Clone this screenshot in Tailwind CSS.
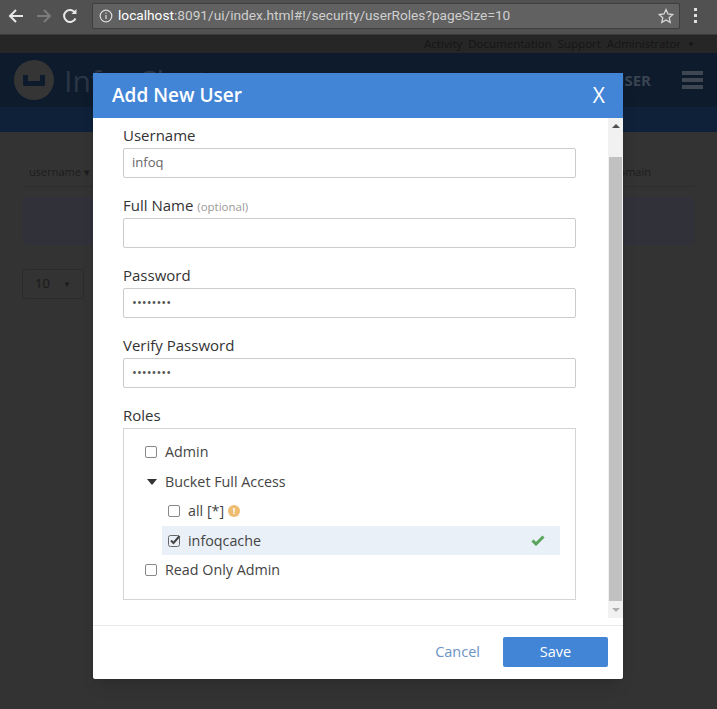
<!DOCTYPE html>
<html lang="en">
<head>
    <title>Add New User</title>
    <meta charset="utf-8">
    <script src="https://cdn.jsdelivr.net/npm/@tailwindcss/browser@4"></script>
</head>
<body class="bg-[#333333] font-['Open_Sans',sans-serif]">
    <div class="relative h-[709px] w-[717px] overflow-hidden">
        <!-- Browser toolbar -->
        <div class="flex h-[35px] items-center bg-[#515151] border-b border-[#3a3a3a] pb-[3px]">
            <div class="flex w-[92px] items-center">
                <svg class="ml-[8px] text-[#e8e8e8]" width="16" height="16" viewBox="0 0 16 16" fill="none" stroke="currentColor" stroke-width="2"><path d="M15 8H2M8 2 2 8l6 6"/></svg>
                <svg class="ml-[12px] text-[#7b7b7b]" width="16" height="16" viewBox="0 0 16 16" fill="none" stroke="currentColor" stroke-width="2"><path d="M1 8h13M8 2l6 6-6 6"/></svg>
                <svg class="ml-[10px] text-[#e8e8e8]" width="16" height="16" viewBox="0 0 16 16" fill="none" stroke="currentColor" stroke-width="2"><path d="M13.5 10.5A6 6 0 1 1 13 4.5"/><path d="M14.5 1v5h-5" fill="currentColor" stroke="none"/></svg>
            </div>
            <div class="flex h-[26px] w-[588px] items-center rounded-[2px] border border-[#3e3e3e] bg-[#616161] pl-[6px] text-[13.700px] text-[#cfcfcf] font-['Roboto',sans-serif]">
                <svg width="14" height="14" viewBox="0 0 14 14" fill="none" stroke="#dddddd" stroke-width="1.2"><circle cx="7" cy="7" r="5.8"/><path d="M7 6v4M7 3.5v1.3"/></svg>
                <span class="ml-[5px] text-white">localhost</span><span>:8091/ui/index.html#!/security/userRoles?pageSize=10</span>
                <svg class="ml-auto mr-[5px]" width="16" height="16" viewBox="0 0 16 16" fill="none" stroke="#d5d5d5" stroke-width="1.3"><path d="m8 1.6 2 4.4 4.700.500-3.500 3.200 1 4.700L8 12 3.800 14.400l1-4.700L1.300 6.500 6 6z"/></svg>
            </div>
            <div class="ml-[14px] flex flex-col gap-[3px]">
                <span class="h-[3px] w-[3px] bg-[#e0e0e0]"></span>
                <span class="h-[3px] w-[3px] bg-[#e0e0e0]"></span>
                <span class="h-[3px] w-[3px] bg-[#e0e0e0]"></span>
            </div>
        </div>

        <!-- Dimmed page -->
        <div class="flex h-[18px] items-center justify-end gap-[6px] bg-[#262626] pr-[22px] text-[11.500px] text-[#151515]">
            <span>Activity</span><span>Documentation</span><span>Support</span><span>Administrator</span><span class="text-[8px]">▼</span>
        </div>
        <div class="flex h-[54px] items-center bg-[#0d1b2d] pl-[14px]">
            <div class="flex h-[40px] w-[40px] items-center justify-center rounded-full bg-[#353535]">
                <div class="h-[11px] w-[22px] rounded-b-[2px] border-[5px] border-t-0 border-[#0d1b2d]"></div>
            </div>
            <span class="ml-[10px] text-[30px] text-[#2b3544]">Infra Cluster</span>
            <span class="ml-auto text-[15px] font-bold text-[#3a4350]">USER</span>
            <div class="ml-[31px] mr-[14px] flex w-[21px] flex-col gap-[3px]">
                <span class="h-[4px] bg-[#3f4752]"></span>
                <span class="h-[4px] bg-[#3f4752]"></span>
                <span class="h-[4px] bg-[#3f4752]"></span>
            </div>
        </div>
        <div class="h-[25px] bg-[#0f2139]"></div>
        <div class="px-[22px] pt-[32px]">
            <div class="flex border-b border-[#2d2d2d] pb-[5px] pl-[7px] pr-[44px] text-[11px] text-[#1c1c1c]">
                <span>username ▾</span><span class="ml-auto">domain</span>
            </div>
            <div class="mt-[10px] h-[48px] rounded-[6px] bg-[#31313a]"></div>
            <div class="mt-[24px] flex h-[30px] w-[62px] items-center justify-between rounded-[3px] border border-[#2b2b2b] px-[12px] text-[13px] text-[#1a1a1a]">
                <span>10</span><span class="text-[8px]">▼</span>
            </div>
        </div>

        <!-- Add New User dialog -->
        <div class="absolute left-[93px] top-[73px] flex h-[606px] w-[530px] flex-col rounded-[2px] bg-white shadow-lg">
            <div class="flex h-[45px] items-center justify-between bg-[#4285d6] pl-[19px] pr-[18px] text-white">
                <h2 class="text-[19px] font-semibold">Add New User</h2>
                <span class="text-[21px]">X</span>
            </div>
            <div class="flex h-[507px]">
                <div class="w-[515px] pl-[30px] pr-[32px] text-[15px] text-[#333333]">
                    <label class="mt-[7px] block h-[23px] leading-[21px] font-medium">Username</label>
                    <div class="flex h-[30px] items-center rounded-[2px] border border-[#cccccc] pl-[8px] text-[13px] text-[#666666]">infoq</div>
                    <label class="mt-[17px] block h-[23px] leading-[21px] font-medium">Full Name <span class="text-[11.500px] font-normal text-[#999999]">(optional)</span></label>
                    <div class="h-[30px] rounded-[2px] border border-[#cccccc]"></div>
                    <label class="mt-[17px] block h-[23px] leading-[21px] font-medium">Password</label>
                    <div class="flex h-[30px] items-center rounded-[2px] border border-[#cccccc] pl-[8px] text-[13px] text-[#555555]">••••••••</div>
                    <label class="mt-[17px] block h-[23px] leading-[21px] font-medium">Verify Password</label>
                    <div class="flex h-[30px] items-center rounded-[2px] border border-[#cccccc] pl-[8px] text-[13px] text-[#555555]">••••••••</div>
                    <label class="mt-[17px] block h-[23px] leading-[21px] font-medium">Roles</label>
                    <div class="h-[172px] border border-[#d4d4d4] pl-[21px] pr-[15px] pt-[8px] text-[14.300px] text-[#444444]">
                        <div class="flex h-[30px] items-center">
                            <span class="h-[12px] w-[12px] rounded-[2px] border border-[#888888]"></span>
                            <span class="ml-[8px]">Admin</span>
                        </div>
                        <div class="flex h-[29px] items-center">
                            <span class="ml-[2px] h-0 w-0 border-x-[5px] border-t-[6px] border-x-transparent border-t-[#333333]"></span>
                            <span class="ml-[8px]">Bucket Full Access</span>
                        </div>
                        <div class="flex h-[30px] items-center pl-[23px]">
                            <span class="h-[12px] w-[12px] rounded-[2px] border border-[#888888]"></span>
                            <span class="ml-[8px]">all [*]</span>
                            <span class="ml-[4px] flex h-[12px] w-[12px] items-center justify-center rounded-full bg-[#efbd72] text-[9px] font-bold text-white">!</span>
                        </div>
                        <div class="ml-[17px] flex h-[29px] items-center bg-[#eaf0f8] pl-[6px] pr-[15px]">
                            <svg width="13" height="13" viewBox="0 0 13 13" fill="none"><rect x="0.500" y="1.500" width="11" height="11" rx="2" stroke="#666666"/><path d="m3 6.500 2.500 2.500L11.500 2" stroke="#444444" stroke-width="2"/></svg>
                            <span class="ml-[7px]">infoqcache</span>
                            <svg class="ml-auto" width="14" height="11" viewBox="0 0 14 11" fill="none"><path d="m1.500 5.500 3.500 3.500 7.500-7.500" stroke="#57a55a" stroke-width="3"/></svg>
                        </div>
                        <div class="flex h-[30px] items-center">
                            <span class="h-[12px] w-[12px] rounded-[2px] border border-[#888888]"></span>
                            <span class="ml-[8px]">Read Only Admin</span>
                        </div>
                    </div>
                </div>
                <!-- Scrollbar -->
                <div class="flex h-[500px] w-[15px] flex-col bg-[#f1f1f1]">
                    <div class="flex h-[16px] items-center justify-center"><span class="h-0 w-0 border-x-[4px] border-b-[4px] border-x-transparent border-b-[#505050]"></span></div>
                    <div class="mx-[1px] mt-[23px] h-[444px] bg-[#c1c1c1]"></div>
                    <div class="flex h-[17px] items-center justify-center"><span class="h-0 w-0 border-x-[4px] border-t-[4px] border-x-transparent border-t-[#b0b0b0]"></span></div>
                </div>
            </div>
            <div class="flex flex-1 items-center justify-end border-t border-[#e8e8e8] pb-[2px] pr-[15px] text-[14.500px]">
                <span class="text-[#6b94c4]">Cancel</span>
                <div class="ml-[23px] flex h-[30px] w-[105px] items-center justify-center rounded-[2px] bg-[#4285d6] text-white">Save</div>
            </div>
        </div>
    </div>
</body>
</html>
